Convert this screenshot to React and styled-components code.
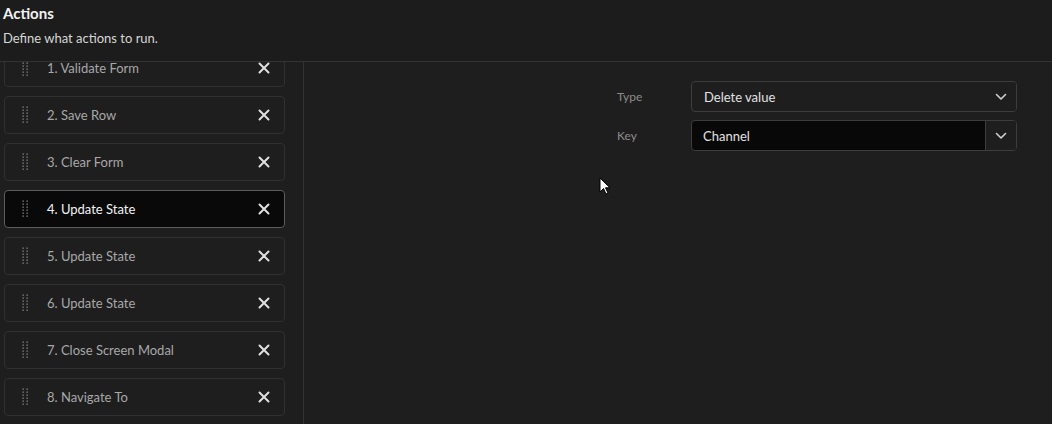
import { useEffect, useRef } from "react"
import styled, { createGlobalStyle } from "styled-components"

const GlobalStyle = createGlobalStyle`
    body {
        margin: 0;
        background: #1e1e1e;
        font-family: Lato, "Open Sans", sans-serif;
    }
`

const Page = styled.div`
    height: 424px;
    display: flex;
    flex-direction: column;
    background: #1e1e1e;
    overflow: hidden;
`

const Header = styled.div`
    height: 62px;
    box-sizing: border-box;
    padding: 3px 3px 0;
    border-bottom: 1px solid #333;
    background: #1c1c1c;
`

const Title = styled.div`
    color: #f2f2f2;
    font-weight: bold;
    font-size: 15px;
    line-height: 20px;
`

const Subtitle = styled.div`
    color: #d6d6d6;
    font-size: 13px;
    line-height: 18px;
    margin-top: 6px;
`

const Body = styled.div`
    flex: 1;
    display: flex;
    min-height: 0;
`

const Sidebar = styled.div`
    width: 303px;
    border-right: 1px solid #333;
    overflow: hidden;
`

const List = styled.div`
    display: flex;
    flex-direction: column;
    gap: 9px;
    padding: 0 0 20px 4px;
`

const Item = styled.div`
    width: 281px;
    height: 38px;
    box-sizing: border-box;
    display: flex;
    align-items: center;
    border: 1px solid ${p => p.$active ? "#5c5c5c" : "#303030"};
    border-radius: 4px;
    background: ${p => p.$active ? "#090909" : "#1e1e1e"};
    color: ${p => p.$active ? "#f2f2f2" : "#a8a8a8"};
    font-size: 13px;
`

const Handle = styled.div`
    width: 42px;
    box-sizing: border-box;
    display: flex;
    padding-left: 17px;
`

const Label = styled.div`
    flex: 1;
`

const Close = styled.div`
    width: 40px;
    display: flex;
    justify-content: center;
    color: #e0e0e0;
`

const Panel = styled.div`
    flex: 1;
    position: relative;
    display: flex;
    justify-content: flex-end;
    padding: 19px 35px 0 0;
`

const Form = styled.div`
    display: grid;
    grid-template-columns: 74px 326px;
    grid-auto-rows: 31px;
    row-gap: 8px;
    align-items: center;
    align-self: flex-start;
`

const FieldLabel = styled.div`
    color: #8c8c8c;
    font-size: 12px;
`

const Select = styled.div`
    height: 31px;
    box-sizing: border-box;
    display: flex;
    align-items: center;
    border: 1px solid #3d3d3d;
    border-radius: 4px;
    background: ${p => p.$dark ? "#080808" : "#1e1e1e"};
    color: #e2e2e2;
    font-size: 13px;
    overflow: hidden;
`

const Value = styled.div`
    flex: 1;
    padding-left: ${p => p.$dark ? "11px" : "12px"};
`

const Chevron = styled.div`
    width: 30px;
    height: 100%;
    display: flex;
    align-items: center;
    justify-content: center;
    border-left: ${p => p.$split ? "1px solid #3d3d3d" : "none"};
    background: #1e1e1e;
    color: #d0d0d0;
`

const Cursor = styled.svg`
    position: absolute;
    left: 295px;
    top: 115px;
`

const actions = [
    "1. Validate Form",
    "2. Save Row",
    "3. Clear Form",
    "4. Update State",
    "5. Update State",
    "6. Update State",
    "7. Close Screen Modal",
    "8. Navigate To",
]

function Dots() {
    const rows = [0, 1, 2, 3, 4, 5]
    return <svg width="7" height="18" viewBox="0 0 7 18">
        {rows.map(r => (
            <g key={r} fill="#8a8a8a">
                <rect x="0.5" y={r * 3 + 0.5} width="1.3" height="1.3" />
                <rect x="4.5" y={r * 3 + 0.5} width="1.3" height="1.3" />
            </g>
        ))}
    </svg>
}

function XIcon() {
    return <svg width="12" height="12" viewBox="0 0 12 12">
        <path d="M1.5 1.5L10.5 10.5M10.5 1.5L1.5 10.5" stroke="currentColor" strokeWidth="2" strokeLinecap="round" />
    </svg>
}

function Down() {
    return <svg width="12" height="8" viewBox="0 0 12 8">
        <path d="M1.5 1.5L6 6L10.5 1.5" stroke="currentColor" strokeWidth="1.6" fill="none" strokeLinecap="round" strokeLinejoin="round" />
    </svg>
}

export default function App() {
    const scrollRef = useRef()

    useEffect(() => {
        scrollRef.current.scrollTop = 13
    }, [])

    return <Page>
        <GlobalStyle />
        <Header>
            <Title>Actions</Title>
            <Subtitle>Define what actions to run.</Subtitle>
        </Header>
        <Body>
            <Sidebar ref={scrollRef}>
                <List>
                    {actions.map((a, i) => (
                        <Item key={a} $active={i === 3}>
                            <Handle><Dots /></Handle>
                            <Label>{a}</Label>
                            <Close><XIcon /></Close>
                        </Item>
                    ))}
                </List>
            </Sidebar>
            <Panel>
                <Form>
                    <FieldLabel>Type</FieldLabel>
                    <Select>
                        <Value>Delete value</Value>
                        <Chevron><Down /></Chevron>
                    </Select>
                    <FieldLabel>Key</FieldLabel>
                    <Select $dark>
                        <Value $dark>Channel</Value>
                        <Chevron $split><Down /></Chevron>
                    </Select>
                </Form>
                <Cursor width="14" height="20" viewBox="0 0 14 20">
                    <path d="M1 1L1 15L4.5 11.5L7 17L9 16L6.5 10.8L11 10.8Z" fill="#fff" stroke="#000" strokeWidth="1" />
                </Cursor>
            </Panel>
        </Body>
    </Page>
}
